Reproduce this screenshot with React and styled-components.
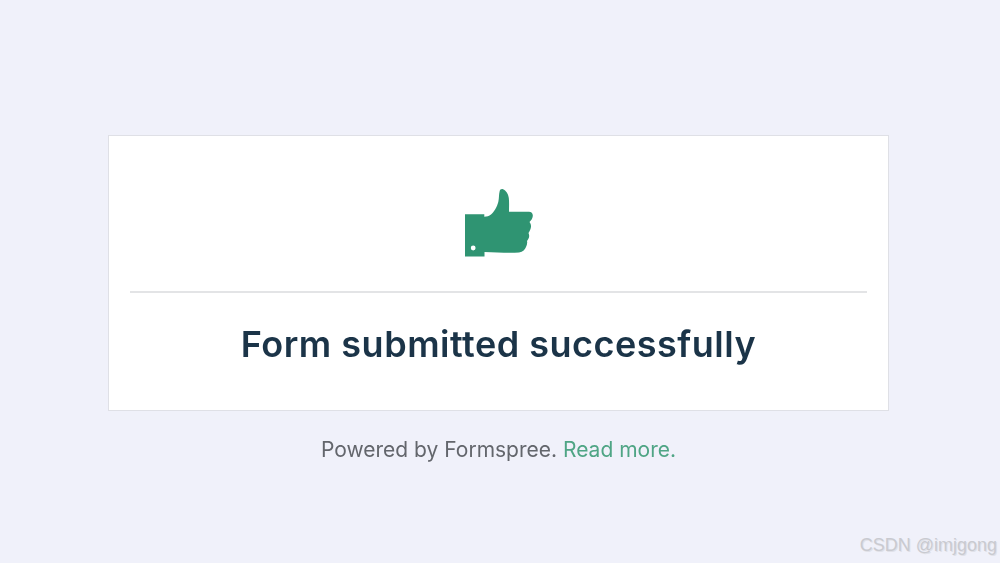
import React from "react";
import styled, { createGlobalStyle } from "styled-components";

const Global = createGlobalStyle`
  html, body { margin: 0; padding: 0; background: #f0f1fa; }
  body { font-family: "Inter", "Liberation Sans", sans-serif; }
`;
const Page = styled.main`
  position: relative;
  width: 1000px;
  height: 563px;
  overflow: hidden;
  background: #f0f1fa;
  box-sizing: border-box;
  padding-top: 135px;
  display: flex;
  flex-direction: column;
  align-items: center;
`;
const Card = styled.section`
  box-sizing: border-box;
  width: 781px;
  height: 276px;
  margin-left: -3px;
  background: #fff;
  border: 1px solid #dfe0e6;
  padding: 0 21px;
  display: flex;
  flex-direction: column;
  align-items: stretch;
`;
const IconRow = styled.div`
  height: 157px;
  flex: none;
  box-sizing: border-box;
  border-bottom: 2px solid #e3e4e6;
  display: flex;
  justify-content: center;
  padding: 52px 0 0 1px;
`;
const Thumb = styled.svg`
  width: 70px;
  height: 70px;
  display: block;
  filter: blur(0.3px);
`;
const Heading = styled.h1`
  margin: 0;
  flex: 1;
  display: flex;
  align-items: center;
  justify-content: center;
  padding-bottom: 16px;
  font-size: 36px;
  font-weight: 600;
  letter-spacing: 0.5px;
  color: #1b3448;
  filter: blur(0.3px);
`;
const Footer = styled.p`
  margin: 27px 0 0 -3px;
  font-size: 21px;
  line-height: 24px;
  color: #63666c;
  filter: blur(0.3px);
`;
const ReadMore = styled.a`
  color: #4fa585;
  text-decoration: none;
`;
const Watermark = styled.span`
  position: absolute;
  right: 3px;
  bottom: 7px;
  font-family: "Liberation Sans", sans-serif;
  font-size: 18px;
  line-height: 22px;
  color: #c9cad0;
  text-shadow: 1px 1px 0 #e0e1e8;
`;

export default function App() {
  return (
    <>
      <Global />
      <Page>
        <Card>
          <IconRow>
            <Thumb viewBox="464 188 70 70" aria-hidden="true">
              <path
                fillRule="evenodd"
                fill="#2f9472"
                d="M465 214.3H484.3V216.7C487 216.7 489 216 491 214.5C494 212 497 207 498.3 202C499.2 198 498.8 194 499.6 191.5C500 189.5 501.5 188.7 503 189.3C506 190.5 508.3 194 508.8 198C509.3 202 509 207 509 211.7H529C531.5 211.7 533 213.5 532.8 216C532.6 218.5 531 220.5 529.5 222C531 224 531.5 226 530.5 229C530 230.5 529 232 528.5 233C529.5 235 529.5 237.5 528 239.5L527 241C527.5 243 527 245 526 247C525 249.5 523 252 519 252.5C510 253.2 497 252.5 484.5 252V256.5H465ZM473.2 245.6A2.4 2.4 0 1 0 473.2 250.4A2.4 2.4 0 1 0 473.2 245.6Z"
              />
            </Thumb>
          </IconRow>
          <Heading>Form submitted successfully</Heading>
        </Card>
        <Footer>
          Powered by Formspree. <ReadMore href="#">Read more.</ReadMore>
        </Footer>
        <Watermark>CSDN @imjgong</Watermark>
      </Page>
    </>
  );
}
